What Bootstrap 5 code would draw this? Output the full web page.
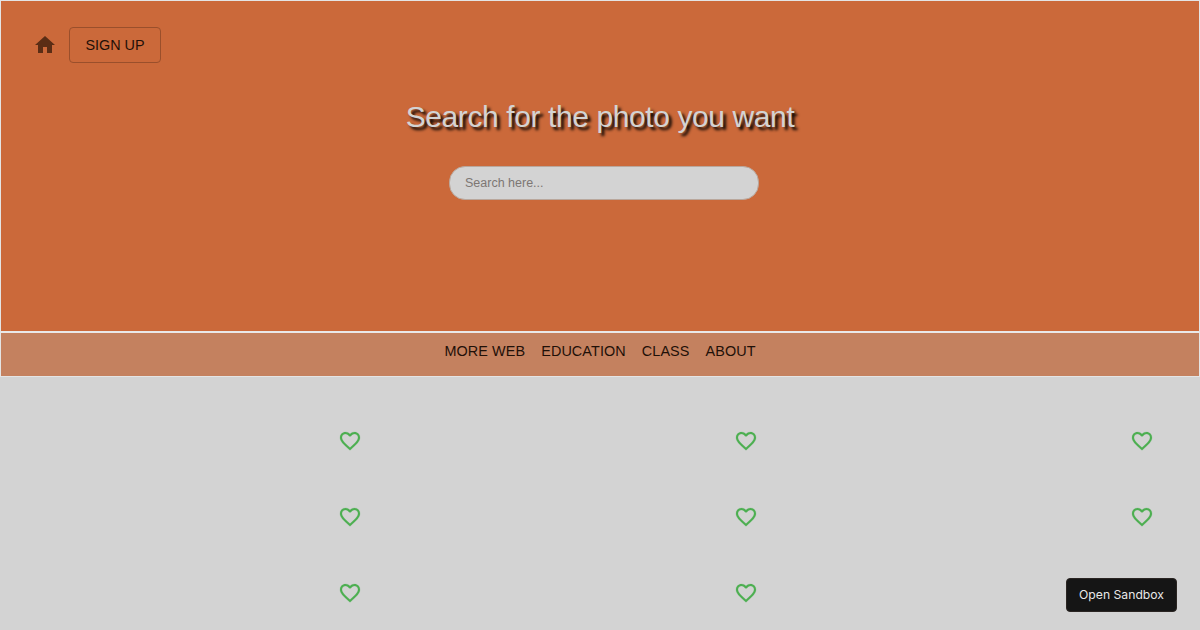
<!DOCTYPE html>
<html lang="en">
<head>
  <meta charset="UTF-8">
  <title>Photo search</title>
  <meta name="viewport" content="width=device-width, initial-scale=1">
  <link href="https://cdn.jsdelivr.net/npm/bootstrap@5.3.3/dist/css/bootstrap.min.css" rel="stylesheet">
  <style>
    html, body { height: 100%; }
    body {
      background-color: #d3d3d3;
      font-family: "Liberation Sans", Arial, sans-serif;
      overflow: hidden;
    }
    .hero {
      height: 333px;
      background-color: #cb693a;
      border: 1px solid #e4e4e4;
      border-bottom: 2px solid #e9e9e9;
      padding: 26px 30px 0;
    }
    .home-link { width: 28px; height: 28px; margin-right: 10px; }
    .signup-btn {
      height: 36px;
      width: 92px;
      padding: 1px 0 0;
      font-size: 14.4px;
      color: #1f1008;
      border: 1px solid #9a4f2b;
      border-radius: 4px;
      background: transparent;
    }
    .hero-title {
      margin: 35px 0 0;
      font-size: 30px;
      letter-spacing: -.4px;
      line-height: 37px;
      font-weight: 400;
      color: #d3d3d3;
      text-shadow: 3px 3px 3px #000;
    }
    .search-box {
      display: block;
      width: 310px;
      height: 34px;
      margin: 31px auto 0;
      padding: 0 15px;
      font-size: 12.5px;
      color: #333;
      background-color: #d3d3d3;
      border: 1px solid #b9a79c;
      border-radius: 16px;
      transform: translateX(4px);
    }
    .search-box::placeholder { color: #7d7773; }
    .menu-bar {
      height: 44px;
      padding-bottom: 5px;
      background-color: #c4815f;
      border-bottom: 1px solid #e4e4e4;
      border-left: 1px solid #e4e4e4;
      border-right: 1px solid #e4e4e4;
      gap: 16px;
    }
    .menu-bar a {
      font-size: 14.4px;
      letter-spacing: .1px;
      color: #1f1008;
      text-decoration: none;
    }
    .heart-grid {
      display: grid;
      grid-template-columns: repeat(3, 396px);
      grid-auto-rows: 76px;
      padding: 52px 6px 0;
    }
    .heart-cell { padding-right: 40px; }
    .heart-cell svg { stroke: #4caf50; stroke-width: .2; }
    .sandbox-btn {
      position: fixed;
      right: 23px;
      bottom: 18px;
      width: 111px;
      height: 34px;
      padding: 0;
      font-family: Inter, "Liberation Sans", sans-serif;
      font-size: 12.2px;
      color: #e8e8e8;
      background-color: #151515;
      border: 1px solid #2a2522;
      border-radius: 4px;
    }
  </style>
</head>
<body>

<header class="hero">
  <div class="d-flex align-items-center">
    <a href="#" class="home-link d-flex align-items-center justify-content-center">
      <svg width="24" height="24" viewBox="0 0 24 24" fill="#5a2d15"><path d="M10 20v-6h4v6h5v-8h3L12 3 2 12h3v8z"/></svg>
    </a>
    <button class="btn signup-btn" type="button">SIGN UP</button>
  </div>
  <h1 class="hero-title text-center">Search for the photo you want</h1>
  <input class="search-box" type="text" placeholder="Search here...">
</header>

<nav class="menu-bar d-flex align-items-center justify-content-center">
  <a href="#">MORE WEB</a>
  <a href="#">EDUCATION</a>
  <a href="#">CLASS</a>
  <a href="#">ABOUT</a>
</nav>

<main class="heart-grid">
  <div class="heart-cell d-flex justify-content-end"><svg width="24" height="24" viewBox="0 0 24 24" fill="#4caf50"><path d="M16.5 3c-1.74 0-3.41.81-4.5 2.09C10.91 3.81 9.24 3 7.5 3 4.42 3 2 5.42 2 8.5c0 3.78 3.4 6.86 8.55 11.54L12 21.35l1.45-1.32C18.6 15.36 22 12.28 22 8.5 22 5.42 19.58 3 16.5 3zm-4.4 15.55l-.1.1-.1-.1C7.14 14.24 4 11.39 4 8.5 4 6.5 5.5 5 7.5 5c1.54 0 3.04.99 3.57 2.36h1.87C13.46 5.99 14.96 5 16.5 5c2 0 3.5 1.5 3.5 3.5 0 2.89-3.14 5.74-7.9 10.05z"/></svg></div>
  <div class="heart-cell d-flex justify-content-end"><svg width="24" height="24" viewBox="0 0 24 24" fill="#4caf50"><path d="M16.5 3c-1.74 0-3.41.81-4.5 2.09C10.91 3.81 9.24 3 7.5 3 4.42 3 2 5.42 2 8.5c0 3.78 3.4 6.86 8.55 11.54L12 21.35l1.45-1.32C18.6 15.36 22 12.28 22 8.5 22 5.42 19.58 3 16.5 3zm-4.4 15.55l-.1.1-.1-.1C7.14 14.24 4 11.39 4 8.5 4 6.5 5.5 5 7.5 5c1.54 0 3.04.99 3.57 2.36h1.87C13.46 5.99 14.96 5 16.5 5c2 0 3.5 1.5 3.5 3.5 0 2.89-3.14 5.74-7.9 10.05z"/></svg></div>
  <div class="heart-cell d-flex justify-content-end"><svg width="24" height="24" viewBox="0 0 24 24" fill="#4caf50"><path d="M16.5 3c-1.74 0-3.41.81-4.5 2.09C10.91 3.81 9.24 3 7.5 3 4.42 3 2 5.42 2 8.5c0 3.78 3.4 6.86 8.55 11.54L12 21.35l1.45-1.32C18.6 15.36 22 12.28 22 8.5 22 5.42 19.58 3 16.5 3zm-4.4 15.55l-.1.1-.1-.1C7.14 14.24 4 11.39 4 8.5 4 6.5 5.5 5 7.5 5c1.54 0 3.04.99 3.57 2.36h1.87C13.46 5.99 14.96 5 16.5 5c2 0 3.5 1.5 3.5 3.5 0 2.89-3.14 5.74-7.9 10.05z"/></svg></div>
  <div class="heart-cell d-flex justify-content-end"><svg width="24" height="24" viewBox="0 0 24 24" fill="#4caf50"><path d="M16.5 3c-1.74 0-3.41.81-4.5 2.09C10.91 3.81 9.24 3 7.5 3 4.42 3 2 5.42 2 8.5c0 3.78 3.4 6.86 8.55 11.54L12 21.35l1.45-1.32C18.6 15.36 22 12.28 22 8.5 22 5.42 19.58 3 16.5 3zm-4.4 15.55l-.1.1-.1-.1C7.14 14.24 4 11.39 4 8.5 4 6.5 5.5 5 7.5 5c1.54 0 3.04.99 3.57 2.36h1.87C13.46 5.99 14.96 5 16.5 5c2 0 3.5 1.5 3.5 3.5 0 2.89-3.14 5.74-7.9 10.05z"/></svg></div>
  <div class="heart-cell d-flex justify-content-end"><svg width="24" height="24" viewBox="0 0 24 24" fill="#4caf50"><path d="M16.5 3c-1.74 0-3.41.81-4.5 2.09C10.91 3.81 9.24 3 7.5 3 4.42 3 2 5.42 2 8.5c0 3.78 3.4 6.86 8.55 11.54L12 21.35l1.45-1.32C18.6 15.36 22 12.28 22 8.5 22 5.42 19.58 3 16.5 3zm-4.4 15.55l-.1.1-.1-.1C7.14 14.24 4 11.39 4 8.5 4 6.5 5.5 5 7.5 5c1.54 0 3.04.99 3.57 2.36h1.87C13.46 5.99 14.96 5 16.5 5c2 0 3.5 1.5 3.5 3.5 0 2.89-3.14 5.74-7.9 10.05z"/></svg></div>
  <div class="heart-cell d-flex justify-content-end"><svg width="24" height="24" viewBox="0 0 24 24" fill="#4caf50"><path d="M16.5 3c-1.74 0-3.41.81-4.5 2.09C10.91 3.81 9.24 3 7.5 3 4.42 3 2 5.42 2 8.5c0 3.78 3.4 6.86 8.55 11.54L12 21.35l1.45-1.32C18.6 15.36 22 12.28 22 8.5 22 5.42 19.58 3 16.5 3zm-4.4 15.55l-.1.1-.1-.1C7.14 14.24 4 11.39 4 8.5 4 6.5 5.5 5 7.5 5c1.54 0 3.04.99 3.57 2.36h1.87C13.46 5.99 14.96 5 16.5 5c2 0 3.5 1.5 3.5 3.5 0 2.89-3.14 5.74-7.9 10.05z"/></svg></div>
  <div class="heart-cell d-flex justify-content-end"><svg width="24" height="24" viewBox="0 0 24 24" fill="#4caf50"><path d="M16.5 3c-1.74 0-3.41.81-4.5 2.09C10.91 3.81 9.24 3 7.5 3 4.42 3 2 5.42 2 8.5c0 3.78 3.4 6.86 8.55 11.54L12 21.35l1.45-1.32C18.6 15.36 22 12.28 22 8.5 22 5.42 19.58 3 16.5 3zm-4.4 15.55l-.1.1-.1-.1C7.14 14.24 4 11.39 4 8.5 4 6.5 5.5 5 7.5 5c1.54 0 3.04.99 3.57 2.36h1.87C13.46 5.99 14.96 5 16.5 5c2 0 3.5 1.5 3.5 3.5 0 2.89-3.14 5.74-7.9 10.05z"/></svg></div>
  <div class="heart-cell d-flex justify-content-end"><svg width="24" height="24" viewBox="0 0 24 24" fill="#4caf50"><path d="M16.5 3c-1.74 0-3.41.81-4.5 2.09C10.91 3.81 9.24 3 7.5 3 4.42 3 2 5.42 2 8.5c0 3.78 3.4 6.86 8.55 11.54L12 21.35l1.45-1.32C18.6 15.36 22 12.28 22 8.5 22 5.42 19.58 3 16.5 3zm-4.4 15.55l-.1.1-.1-.1C7.14 14.24 4 11.39 4 8.5 4 6.5 5.5 5 7.5 5c1.54 0 3.04.99 3.57 2.36h1.87C13.46 5.99 14.96 5 16.5 5c2 0 3.5 1.5 3.5 3.5 0 2.89-3.14 5.74-7.9 10.05z"/></svg></div>
  <div class="heart-cell d-flex justify-content-end"><svg width="24" height="24" viewBox="0 0 24 24" fill="#4caf50"><path d="M16.5 3c-1.74 0-3.41.81-4.5 2.09C10.91 3.81 9.24 3 7.5 3 4.42 3 2 5.42 2 8.5c0 3.78 3.4 6.86 8.55 11.54L12 21.35l1.45-1.32C18.6 15.36 22 12.28 22 8.5 22 5.42 19.58 3 16.5 3zm-4.4 15.55l-.1.1-.1-.1C7.14 14.24 4 11.39 4 8.5 4 6.5 5.5 5 7.5 5c1.54 0 3.04.99 3.57 2.36h1.87C13.46 5.99 14.96 5 16.5 5c2 0 3.5 1.5 3.5 3.5 0 2.89-3.14 5.74-7.9 10.05z"/></svg></div>
</main>

<button class="btn sandbox-btn" type="button">Open Sandbox</button>

<script src="https://cdn.jsdelivr.net/npm/bootstrap@5.3.3/dist/js/bootstrap.bundle.min.js"></script>
</body>
</html>
